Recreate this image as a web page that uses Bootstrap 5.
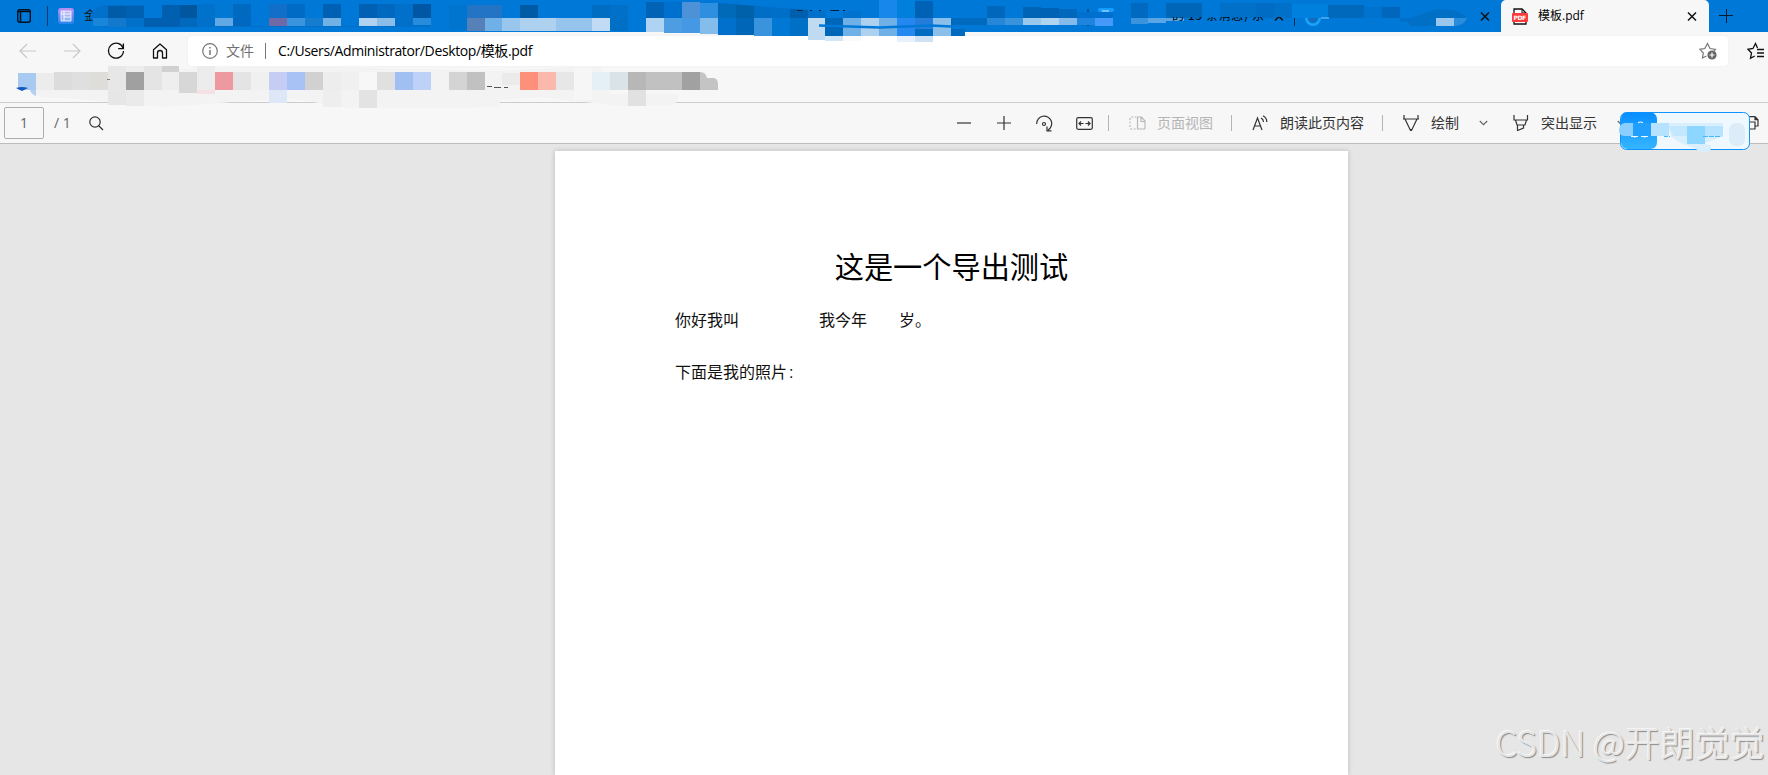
<!DOCTYPE html>
<html lang="zh-CN">
<head>
<meta charset="utf-8">
<title>模板.pdf</title>
<link href="https://cdn.jsdelivr.net/npm/bootstrap@5.3.0/dist/css/bootstrap.min.css" rel="stylesheet">
<style>
body{height:775px;overflow:hidden;background:#e6e6e6;font-family:"Open Sans","Noto Sans CJK SC",sans-serif;font-size:14px;line-height:20px;color:#111}
svg{display:block;flex:none}
.ln{fill:none;stroke:currentColor;stroke-width:1.2}
.tabstrip{height:32px;background:#0078d7}
.vline{width:1px;height:20px;background:#123c63}
.active-tab{width:208px;height:32px;background:#f7f7f7;border-radius:5px 5px 0 0;font-size:12px;padding-left:11px;padding-right:10px}
.rest-tabs{width:1405px}
.navrow{height:34px;background:#f7f7f7;padding-top:4px;padding-left:19px}
.addr{width:1540px;height:30px;background:#fff;border-radius:4px;box-shadow:0 0 3px #0000000d;margin-left:19px;padding-left:14px;padding-right:11px}
.url{font-size:14px;letter-spacing:-.38px;color:#000}
.bookmarks{height:37px;background:#f7f7f7;border-bottom:1px solid #ccc}
.pdfbar{height:41px;background:#f7f7f7;border-bottom:1px solid #bcbcbc;color:#333;padding-left:4px}
.pagebox{width:40px;height:32px;border:1px solid #adadad;border-radius:2px;color:#666}
.sep{width:1px;height:16px;background:#b5b5b5}
.sheet{width:793px;height:624px;margin:7px 0 0 555px;background:#fff;box-shadow:0 0 5px #0003;padding:94px 120px 0;font-family:"Noto Sans CJK SC",sans-serif;font-size:16px;color:#111}
.sheet h1{font-size:29.2px;line-height:40px;font-weight:400;margin:0;color:#000}
.line{line-height:24px;white-space:nowrap}
.mosaic{left:0;top:0;z-index:3;pointer-events:none}
.wm{right:3px;bottom:8px;font:300 35px/50px "Noto Sans CJK SC",sans-serif;color:#e5e5e5;text-shadow:-1px -1px 0 #f7f7f7,1px 1px 1px #888;white-space:nowrap}
</style>
<script src="https://cdn.jsdelivr.net/npm/bootstrap@5.3.0/dist/js/bootstrap.bundle.min.js"></script>
</head>
<body class="position-relative">
<header>
<div class="tabstrip d-flex align-items-center">
 <div class="rest-tabs d-flex align-items-center">
  <svg width="14" height="14" viewBox="0 0 14 14" style="margin-left:17px"><rect x=".7" y=".7" width="12.6" height="12.6" rx="2" fill="none" stroke="#001120" stroke-width="1.4"/><path d="M1 2.5h12M3.500 3v10" stroke="#001120" stroke-width="1.500"/></svg>
  <span class="vline ms-3"></span>
  <svg width="16" height="16" viewBox="0 0 16 16" style="margin-left:10px"><defs><linearGradient id="g" x2="0" y2="1"><stop stop-color="#b98ff0"/><stop offset="1" stop-color="#2585f0"/></linearGradient></defs><rect width="16" height="16" rx="3" fill="url(#g)"/><path d="M3 3h10v10H3zM3 6h10M6 3v10M6 9h7" fill="#ffffff60" stroke="#ffffffd0" stroke-width="1"/></svg>
  <span style="margin-left:10px;font-size:12px">金</span>
 </div>
 <svg width="96" height="32" viewBox="1405 0 96 32"><path d="M1481 12.500l8 8m0-8l-8 8" stroke="#111" stroke-width="1.5"/></svg>
 <div class="active-tab d-flex align-items-center">
  <svg width="16" height="17" viewBox="0 0 16 17"><path d="M2 16V1h8l4 4v11z" fill="#fff" stroke="#111" stroke-width="1.3"/><path d="M10 1v4h4" fill="none" stroke="#111"/><rect y="5" width="16" height="9" rx="1" fill="#fb3b3b"/><text x="1.6" y="12" font-family="DejaVu Sans" font-weight="700" font-size="6" fill="#fff" textLength="12.5">PDF</text></svg>
  <span style="margin-left:10px" class="text-black">模板.pdf</span>
  <svg class="ms-auto" width="14" height="14" viewBox="0 0 14 14"><path d="M3 3.500l8 8m0-8l-8 8" stroke="#111" stroke-width="1.5"/></svg>
 </div>
 <svg width="34" height="32" viewBox="0 0 34 32"><path d="M10 15.500h14M17.500 9v14" stroke="#081c30"/></svg>
</div>
<div class="navrow d-flex align-items-center">
 <svg width="18" height="18" viewBox="0 0 18 18" style="color:#c8c8c8" class="ln"><path d="M17 9H1M8 2L1 9l7 7"/></svg>
 <svg width="18" height="18" viewBox="0 0 18 18" style="color:#c8c8c8;margin-left:26px" class="ln"><path d="M1 9h16M10 2l7 7-7 7"/></svg>
 <svg width="18" height="18" viewBox="0 0 18 18" style="margin-left:26px" class="ln"><path d="M16.200 6.500A7.500 7.500 0 1 0 16.500 9M16.400 1.500v5.200h-5.200" stroke-width="1.3"/></svg>
 <svg width="18" height="18" viewBox="0 0 18 18" style="margin-left:26px" class="ln"><path d="M2.500 7.700L9 2l6.500 5.700v8.300h-4v-5a2.500 2.500 0 0 0-5 0v5h-4z" stroke-width="1.3" stroke-linejoin="round"/></svg>
 <div class="addr d-flex align-items-center">
  <svg width="16" height="16" viewBox="0 0 16 16" class="ln" style="color:#767676"><circle cx="8" cy="8" r="7.300"/><path d="M8 7v5M8 4v1.500" stroke-width="1.500"/></svg>
  <span class="ms-2" style="color:#707070">文件</span>
  <span class="sep" style="margin:0 12px 0 11px;background:#777"></span>
  <span class="url">C:/Users/Administrator/Desktop/模板.pdf</span>
  <svg class="ms-auto ln" style="color:#777" width="18" height="18" viewBox="0 0 18 18"><path d="M7.500 14L3.500 16l.8-5L1 7.300l4.800-.8L8.500 1.500l2.500 5 5.500.8-1.500 1.500"/><circle cx="13" cy="13" r="4" fill="#666" stroke="#666"/><path d="M10.500 13h5M13 10.500v5" stroke="#fff"/></svg>
 </div>
 <svg style="margin-left:19px" width="17" height="18" viewBox="0 0 17 18" class="ln"><path d="M10.500 6L8.500 1.500l-2.500 5-5 .8L4.500 11l-1 5.300 4.200-2.300M10 7.500h7M10 11h7M10 14.500h7" stroke-width="1.300"/></svg>
</div>
<div class="bookmarks"></div>
<div class="pdfbar d-flex align-items-center">
 <span class="pagebox d-flex align-items-center justify-content-center">1</span>
 <span style="margin-left:10px;width:18px;white-space:nowrap;color:#666">/ 1</span>
 <svg style="margin-left:17px" width="15" height="15" viewBox="0 0 15 15" class="ln"><circle cx="6" cy="6" r="5.200"/><path d="M9.500 9.500L14 14"/></svg>
 <svg style="margin-left:853px" width="14" height="14" viewBox="0 0 14 14" class="ln"><path d="M0 7h14"/></svg>
 <svg style="margin-left:26px" width="14" height="14" viewBox="0 0 14 14" class="ln"><path d="M0 7h14M7 0v14"/></svg>
 <svg style="margin-left:25px" width="17" height="17" viewBox="0 0 17 17" class="ln"><path d="M.7 9A7.500 7.500 0 1 1 12 15M11 11.500v4.400h4.500"/><circle cx="8" cy="9" r="1.500"/></svg>
 <svg style="margin-left:23px" width="17" height="13" viewBox="0 0 17 13" class="ln"><rect x=".7" y=".7" width="15.600" height="11.600" rx="1.500"/><path d="M3 6.500h4.500M9.500 6.500H14M5 4.500l-2 2 2 2M12 4.500l2 2-2 2"/></svg>
 <span class="sep" style="margin-left:15px"></span>
 <svg style="margin-left:20px;color:#b9b9b9" width="17" height="14" viewBox="0 0 17 14" class="ln"><path d="M7.500 1H2a1 1 0 0 0-1 1v10a1 1 0 0 0 1 1h5.500" stroke-dasharray="2 1.500"/><path d="M8.500 1h4l3.500 4v7a1 1 0 0 1-1 1H8.500zM12 1v4.500h4"/></svg>
 <span style="margin-left:11px;color:#b5b5b5">页面视图</span>
 <span class="sep" style="margin-left:18px"></span>
 <svg style="margin-left:20px" width="17" height="16" viewBox="0 0 17 16" class="ln"><path d="M1 15L5.500 3 10 15M2.500 11h6M9 3a4.500 4.500 0 0 1 2.500 4M11 .8A7 7 0 0 1 14.800 7"/></svg>
 <span style="margin-left:11px">朗读此页内容</span>
 <span class="sep" style="margin-left:18px"></span>
 <svg style="margin-left:20px" width="16" height="16" viewBox="0 0 16 16" class="ln"><path d="M1 0v4M15 0v4M0 4h16M2 4l5 10.500h2L14 4M7 14.500l1 1.500 1-1.500"/></svg>
 <span style="margin-left:12px">绘制</span>
 <svg style="margin-left:20px;color:#666" width="9" height="6" viewBox="0 0 9 6" class="ln"><path d="M.8 1l3.700 3.700L8.200 1"/></svg>
 <svg style="margin-left:25px" width="16" height="16" viewBox="0 0 16 16" class="ln"><path d="M1 0v5h13.500V0M2.500 5l1.500 5h8l1.500-5M4.500 10v5.500l6-2.500v-3"/></svg>
 <span style="margin-left:12px">突出显示</span>
 <svg style="margin-left:20px;color:#666" width="9" height="6" viewBox="0 0 9 6" class="ln"><path d="M.8 1l3.700 3.700L8.200 1"/></svg>
 <svg class="ms-auto" style="margin-right:9px" width="16" height="14" viewBox="0 0 16 14"><path class="ln" d="M1 .7h11l3 3V10h-3M1 6h11v7H1M12 .7v3h3"/></svg>
</div>
</header>
<main class="sheet">
 <h1 class="text-center">这是一个导出测试</h1>
 <div class="line d-flex" style="margin-top:22px"><span>你好我叫</span><span style="margin-left:80px">我今年</span><span style="margin-left:32px">岁。</span></div>
 <div class="line" style="margin-top:28px">下面是我的照片<span style="font-family:'Liberation Sans';margin-left:2px">:</span></div>
</main>
<svg class="mosaic position-absolute" width="1768" height="160" viewBox="0 0 1768 160">
 <path d="M90 18Q91 7 106 5H430V27H110Q96 27 90 18z" fill="#0070ca"/>
 <path d="M1088 6v20M1294.500 17v9" stroke="#062b4c"/>
 <g id="tabblocks"></g>
 <path d="M700 0H1300V11L1230 8 820 11 718 3z" fill="#0078d7"/>
 <g id="overblocks"></g>
 <svg x="1160" y="17" width="128" height="5" viewBox="1160 17 128 5"><text x="1172" y="20" font-size="12" font-family="Noto Sans CJK SC" textLength="92">的 15 条消息) 东</text><path d="M1275 12.500l8 8m0-8l-8 8" stroke="#111" stroke-width="1.500"/></svg>
 <path d="M797 10.500h6m7 0h2m7 0h2m9 0h9m4 0h2" stroke="#00213b"/>
 <rect x="1098" y="8" width="16" height="4" rx="2" fill="#159cff"/><path d="M1102 11h7" stroke="#cceaff"/>
 <path d="M1305 18a8 8 0 0 0 16 0z" fill="#1ba3f5"/><path d="M1308 18a5 5 0 0 0 10 0" fill="#146bbd" stroke="#067ad6"/><path d="M1321 18h8" stroke="#81c8ff"/>
 <path d="M819 25.500l61 2 51-2 20 1" stroke="#0078d7" stroke-width="2.500" fill="none"/>
 <path d="M1405 20L1436 9q28 0 31 11-4 6-16 6h-40z" fill="#006fc6"/><path d="M1436 18h18v8h-18z" fill="#98c6ec"/><path d="M1454 18h13q-3 8-13 8z" fill="#288ddd"/>
 <path d="M30 92Q35 98 65 98L165 107 288 98 350 108H440L500 107V100L540 97 620 106 672 105Q679 103 678 94H610L600 66 555 68 500 71 280 66 90 72 36 77z" fill="#f3f3f3"/>
 <g id="bookblocks"></g>
 <path d="M16 88q6-2 12 0l-6 3z" fill="#1558c0"/><path d="M30 90h6v6q-5-2-6-6z" fill="#b5d0f1"/>
 <path d="M700 72q6 0 7 6h7q4 1 4 6v6h-18z" fill="#c4c4c4"/>
 <path d="M107 79.500h3" stroke="#947965"/><path d="M487 86.500h5m2 1h7m3 0h4" stroke="#555"/>
 <defs><linearGradient id="b" x2="0" y2="1"><stop stop-color="#078eff"/><stop offset="1" stop-color="#35b5ff"/></linearGradient></defs>
 <rect x="1620.500" y="112.500" width="129" height="37" rx="6" fill="#f0f8ff" stroke="#0d94ff"/>
 <path d="M1627 112.500h24q6 1 6 7V142q0 6-6 7h-24q-6-1-6-7v-23q0-6 6-6.500z" fill="url(#b)"/>
 <path d="M1631 136h7q-3 2-7 0zM1641 136h7q-3 2-7 0z" stroke="#fff" fill="#fff"/>
 <path d="M1664 136.500h6m34 0h18" stroke="#42b8ff" stroke-dasharray="4 1"/>
 <path d="M1625 123h8v13h-8q-6 0-6-6t6-7z" fill="#8acfff"/><path d="M1633 123h18v13h-18z" fill="#209fff"/><path d="M1651 123h18v13h-18z" fill="#b5e2ff"/>
 <path d="M1669 123h54v13l-20 8 8 1q2 8-10 7-6-4-14-7-16-4-18-15z" fill="#d9effd"/><path d="M1669 126h18v10h-14z" fill="#c2e7ff"/><path d="M1687 126h18v18h-18z" fill="#8cd6ff"/><path d="M1705 126h18v10h-18z" fill="#b6e3ff"/>
 <path d="M1638 122.500q3-1 5 0" stroke="#fff" fill="none"/><path d="M1703 136.500h18" stroke="#42b8ff" stroke-dasharray="5 1"/>
 <rect x="1729" y="123" width="16" height="23" rx="7" fill="#dcecf8"/>
</svg>
<div class="wm position-absolute">CSDN @开朗觉觉</div>
<script>
// Each entry: x, y, width, height, colour of one mosaic cell
const paint=(id,rows)=>{document.getElementById(id).innerHTML=rows.trim().split(';').filter(Boolean).map(r=>{const [x,y,w,h,c]=r.trim().split(' ');return `<rect x="${x}" y="${y}" width="${w}" height="${h}" fill="#${c}" shape-rendering="crispEdges"/>`}).join('')};
paint('tabblocks',`108 6 18 12 005ba8;126 6 18 12 0061b3;144 5 18 13 0078d7;162 5 18 13 005fae;180 5 17 13 00569f;197 4 18 14 0072cc;215 4 18 14 0078d4;233 4 18 14 006ac0;251 4 18 22 0078d7;269 4 18 14 126fc9;287 4 18 14 006bc4;305 4 18 14 0078d7;323 4 18 14 0060b3;341 4 18 22 0078d7;359 4 18 14 0060b3;377 4 18 14 0068bf;395 4 18 22 0070cb;413 4 18 14 0058a4;
93 18 15 8 1a86da;108 18 18 9 1379cd;126 18 18 9 0070ca;144 18 36 9 005fb0;180 18 17 9 0069be;215 18 18 8 62a8e4;233 18 18 8 0068c0;269 18 18 8 6f6aa6;287 18 18 8 3a94de;305 18 18 8 147dd0;323 18 18 8 72b1e6;359 18 18 8 b0d1f0;377 18 18 8 8bbde9;413 18 18 7 278cdb;
449 5 18 25 0075cf;467 5 35 13 2374c5;520 5 18 13 005ba6;592 5 18 13 006cc2;610 5 18 13 0070c8;646 2 18 16 0063b5;664 2 18 16 0070ce;718 3 18 15 0069b8;736 3 18 15 0061ab;754 5 18 13 006ec4;772 5 18 13 006fc8;790 8 18 10 005fac;808 9 18 9 0070ca;843 11 18 7 0072ce;
467 18 18 13 5580b8;485 18 17 13 6fb0e6;502 18 18 13 98c6ec;520 18 36 13 afd1f0;556 18 36 13 96c4ec;592 18 18 13 c0dbf3;610 18 18 13 0070c6;646 18 18 14 afd3f2;664 18 18 15 4d9de2;682 18 18 15 4598e4;718 18 18 17 0070cc;736 18 18 17 0066b8;754 18 18 18 3a93dd;772 18 18 18 0078d4;790 18 18 18 006fc6;808 18 17 22 c0daf2;825 18 18 18 0066b8;825 36 18 5 d2e6f5;843 18 18 18 6fb0e6;861 18 18 18 afd1f0;843 36 18 5 fafafa;879 18 18 18 6fb0e6`);
paint('overblocks',`682 2 18 16 4d91d6;700 3 18 15 2e8fe0;700 18 18 16 84bdec;879 0 18 18 1887ec;897 0 18 18 0080dc;897 18 18 18 2587f0;897 36 18 6 e7f0fb;915 1 18 17 0062b5;915 18 18 11 257dda;915 29 18 7 006bc0;915 36 18 6 cfe2f4;933 18 18 18 8abfea;951 18 36 7 006abf;951 29 14 7 006abf;987 6 18 12 0068bc;987 18 18 7 2687d9;1005 18 18 7 3a93dd;1023 7 18 11 0064b6;1041 8 18 10 0062b5;1059 9 18 9 0068bc;1077 12 18 6 0070ce;1023 18 18 7 98c8ec;1041 18 18 7 b0d3f0;1059 18 18 7 84bbea;1077 18 18 7 1e84de;1095 12 18 6 0070d0;1095 18 18 8 4499fb;1131 3 17 15 006ac0;1131 18 17 6 3a93dd;1148 18 18 5 5aa6e5;1166 3 36 15 0066b8;1166 18 18 3 5aa6e5;1220 3 72 15 0070c8;1256 3 18 15 006cc4;1292 4 36 14 0080de;1328 5 36 13 0069bc;1364 7 18 11 0073cf;1382 7 18 11 0067bd;1400 18 10 4 0070c8`);
paint('bookblocks',`18 73 18 17 a9caf0;36 73 18 17 ececec;54 72 18 18 dcdcdc;72 72 18 18 dfdfdf;90 72 18 18 dfddda;108 66 18 24 e7e7e7;126 66 18 6 ededed;126 72 18 18 a0a0a0;144 66 18 24 e4e4e4;162 66 17 6 d1d1d1;162 72 17 18 eee;179 72 18 21 d7d7d7;197 66 18 24 ececec;215 72 18 18 ed999f;233 72 18 18 e4e4e4;251 72 18 18 f0f0f0;269 72 18 18 c5cdf4;287 72 18 18 a9c2f5;305 72 18 18 d1d1d1;323 72 18 18 ededed;341 72 18 18 f0f0f0;359 72 18 18 f7f7f7;377 72 18 18 e0e0e0;395 72 18 18 a0c0f3;413 72 18 18 bdd2f6;449 72 18 18 d4d4d4;467 72 18 18 c1c1c1;502 73 18 12 ebebeb;520 72 18 18 fc907b;538 72 18 18 fab9ab;556 72 18 18 e7e7e7;574 68 18 32 f6f6f6;592 72 18 18 e4f0f6;610 72 18 18 dae4e7;628 72 18 18 b7b7b7;646 72 36 18 c1c1c1;682 72 18 18 a1a1a1;
108 90 18 15 e6e6e6;126 90 18 16 eaeaea;197 90 18 4 f5e1e3;269 90 18 13 dde7f7;323 90 18 17 eee;359 90 18 18 e3e3e3;628 90 18 16 e1e1e1`);
</script>
</body>
</html>
